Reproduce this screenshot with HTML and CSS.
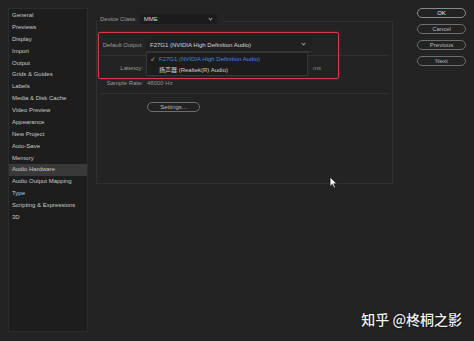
FILE: index.html
```html
<!DOCTYPE html>
<html lang="en">

<head>
    <meta charset="UTF-8">
    <title>Preferences</title>
    <link rel="stylesheet" href="styles.css">
</head>

<body>
    <div class="vindue">
        <ul class="sidebar">
            <li>General</li>
            <li>Previews</li>
            <li>Display</li>
            <li>Import</li>
            <li>Output</li>
            <li>Grids &amp; Guides</li>
            <li>Labels</li>
            <li>Media &amp; Disk Cache</li>
            <li>Video Preview</li>
            <li>Appearance</li>
            <li>New Project</li>
            <li>Auto-Save</li>
            <li>Memory</li>
            <li class="valgt">Audio Hardware</li>
            <li>Audio Output Mapping</li>
            <li>Type</li>
            <li>Scripting &amp; Expressions</li>
            <li>3D</li>
        </ul>

        <main>
            <section class="panel">
                <div class="device">
                    <span class="lbl">Device Class:</span>
                    <div class="select mme">MME <span class="pil"></span></div>
                </div>

                <div class="row output">
                    <span class="lbl">Default Output:</span>
                    <div class="select lang">F27G1 (NVIDIA High Definition Audio) <span class="pil"></span></div>
                </div>

                <div class="linje"></div>

                <div class="row latency">
                    <span class="lbl">Latency:</span>
                    <div class="felt"></div>
                    <span class="enhed">ms</span>
                </div>

                <div class="row rate">
                    <span class="lbl">Sample Rate:</span>
                    <span class="vaerdi">48000 Hz</span>
                </div>

                <div class="linje"></div>

                <div class="row settings">
                    <button class="pille indst">Settings...</button>
                </div>
            </section>

            <ul class="dropdown">
                <li class="aktiv"><span class="flueben">&#10003;</span>F27G1 (NVIDIA High Definition Audio)</li>
                <li><span class="flueben"></span>扬声器 (Realtek(R) Audio)</li>
            </ul>

            <div class="markering"></div>

            <svg class="cursor" width="9" height="13" viewBox="0 0 9 13">
                <path d="M1 1 L1 10.5 L3.3 8.4 L5 12 L6.5 11.3 L4.9 7.8 L8 7.8 Z" fill="#f4f4f4" stroke="#111" stroke-width="0.8"/>
            </svg>
        </main>

        <div class="knapper">
            <button class="pille ok">OK</button>
            <button class="pille">Cancel</button>
            <button class="pille">Previous</button>
            <button class="pille">Next</button>
        </div>
    </div>

    <div class="vandmaerke">知乎 @柊桐之影</div>
</body></html>
```

FILE: styles.css
```css
* {
    box-sizing: border-box;
}

body {
    margin: 0;
    width: 474px;
    height: 341px;
    overflow: hidden;
    background-color: #232323;
    font-family: "Liberation Sans", "Noto Sans CJK SC", sans-serif;
    font-size: 6px;
    color: #c8c8c8;
    position: relative;
}

.vindue {
    display: flex;
    padding: 8px;
}

/* venstre liste */
.sidebar {
    list-style: none;
    margin: 0;
    padding: 1px 0 0 0;
    width: 80px;
    height: 324px;
    background-color: #1d1d1d;
    border: 1px solid #2c2c2c;
}

.sidebar li {
    height: 11.875px;
    line-height: 11.875px;
    padding-left: 3px;
    white-space: nowrap;
}

.sidebar .valgt {
    background-color: #393939;
}

/* indhold */
main {
    position: relative;
    width: 297px;
    margin-left: 8px;
}

.panel {
    margin-top: 13px;
    height: 163px;
    border: 1px solid #303030;
}

.device {
    display: flex;
    align-items: center;
    gap: 3px;
    width: 126px;
    height: 10px;
    margin-top: -8px;
    padding-left: 3px;
    background-color: #232323;
}

.lbl {
    color: #9c9c9c;
    white-space: nowrap;
}

.select {
    position: relative;
    display: flex;
    align-items: center;
    height: 10px;
    padding-left: 4px;
    background-color: #1b1b1b;
    color: #d6d6d6;
    white-space: nowrap;
}

.mme {
    width: 77px;
}

.pil {
    position: absolute;
    right: 5px;
    top: 3px;
    width: 3px;
    height: 3px;
    border-right: 1px solid #9a9a9a;
    border-bottom: 1px solid #9a9a9a;
    transform: rotate(45deg);
}

.row {
    display: flex;
    align-items: center;
}

.row .lbl {
    width: 46px;
    text-align: right;
    margin-right: 3px;
}

.output {
    margin-top: 14px;
    height: 14px;
}

.lang {
    width: 166px;
    height: 14px;
    background-color: #202020;
    border-bottom: 1px solid #333;
}

.lang .pil {
    top: 4px;
    right: 7px;
}

.linje {
    height: 0;
    border-top: 1px solid #303030;
    margin: 3px 3px 0 3px;
}

.latency {
    margin-top: 6px;
    height: 12px;
}

.felt {
    width: 162px;
    height: 12px;
    background-color: #1b1b1b;
}

.enhed {
    margin-left: 5px;
    color: #8a8a8a;
}

.rate {
    margin-top: 4px;
    height: 10px;
}

.vaerdi {
    margin-left: 1px;
    color: #8f8f8f;
}

.rate + .linje {
    margin-top: 5px;
}

.settings {
    margin-top: 8px;
    padding-left: 50px;
}

.pille {
    display: block;
    height: 10px;
    padding: 0;
    border: 1px solid #6e6e6e;
    border-radius: 6px;
    background-color: #222;
    color: #b8b8b8;
    font-family: "Liberation Sans", sans-serif;
    font-size: 6px;
    line-height: 8px;
    text-align: center;
}

.indst {
    width: 53px;
}

/* menu over indholdet */
.dropdown {
    position: absolute;
    left: 50px;
    top: 44px;
    width: 162px;
    height: 24px;
    margin: 0;
    padding: 0;
    list-style: none;
    background-color: #1c1c1c;
    border: 1px solid #363636;
}

.dropdown li {
    display: flex;
    align-items: center;
    height: 11px;
    padding-left: 4px;
    color: #d0d0d0;
    white-space: nowrap;
}

.dropdown .aktiv {
    color: #4a86dc;
}

.flueben {
    width: 8px;
    color: #e0e0e0;
    font-size: 5px;
}

.markering {
    position: absolute;
    left: 2px;
    top: 24px;
    width: 241px;
    height: 47px;
    border: 1.6px solid #d8383f;
    border-radius: 2px;
    box-shadow: 0 0 2px rgba(216, 56, 63, 0.6);
}

.cursor {
    position: absolute;
    left: 233px;
    top: 168px;
}

/* knapper til højre */
.knapper {
    display: flex;
    flex-direction: column;
    gap: 6px;
    margin-left: 24px;
}

.knapper .pille {
    width: 49px;
}

.ok {
    color: #ececec;
    border-color: #8a8a8a;
}

.vandmaerke {
    position: absolute;
    right: 12px;
    bottom: 12px;
    font-family: "Noto Sans CJK SC", sans-serif;
    font-size: 14px;
    font-weight: 500;
    color: #f2f2f2;
    text-shadow: 0 0 2px #000;
}
```
